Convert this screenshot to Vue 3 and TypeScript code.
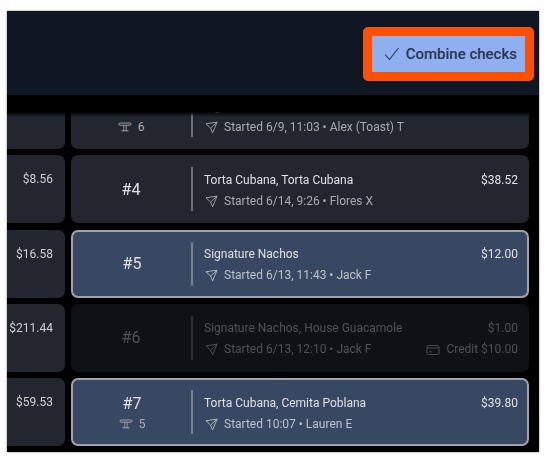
<script setup lang="ts">
interface Row {
  side: string
  num: string
  seats?: string
  title: string
  amount: string
  started: string
  state: 'normal' | 'selected' | 'dim'
  credit?: string
}
const rows: Row[] = [
  { side: '$24.10', num: '#3', seats: '6', title: 'Signature Nachos', amount: '$18.00', started: 'Started 6/9, 11:03 • Alex (Toast) T', state: 'normal' },
  { side: '$8.56', num: '#4', title: 'Torta Cubana, Torta Cubana', amount: '$38.52', started: 'Started 6/14, 9:26 • Flores X', state: 'normal' },
  { side: '$16.58', num: '#5', title: 'Signature Nachos', amount: '$12.00', started: 'Started 6/13, 11:43 • Jack F', state: 'selected' },
  { side: '$211.44', num: '#6', title: 'Signature Nachos, House Guacamole', amount: '$1.00', started: 'Started 6/13, 12:10 • Jack F', state: 'dim', credit: 'Credit $10.00' },
  { side: '$59.53', num: '#7', seats: '5', title: 'Torta Cubana, Cemita Poblana', amount: '$39.80', started: 'Started 10:07 • Lauren E', state: 'selected' },
]
</script>

<template>
  <div class="page">
    <div class="frame">
      <header class="header">
        <div class="highlight">
          <button class="combine" type="button">
            <svg class="check" viewBox="0 0 16 14" width="16" height="14" fill="none" stroke="currentColor" stroke-width="1.1">
              <path d="M1 7.5 L5.5 12.5 L14.5 1" />
            </svg>
            Combine checks
          </button>
        </div>
      </header>
      <div class="body">
        <div class="shade"></div>
        <div class="list">
          <div v-for="row in rows" :key="row.num" class="row">
            <div class="side">{{ row.side }}</div>
            <div class="card" :class="row.state">
              <div class="num">
                <div class="num-main">{{ row.num }}</div>
                <div v-if="row.seats" class="seats">
                  <svg viewBox="0 0 14 10" width="14" height="10" fill="none" stroke="currentColor">
                    <rect x="1" y="1" width="12" height="2.2" rx="1.1" stroke-width="0.9" />
                    <path d="M5.8 3.4 V8.4 M8.2 3.4 V8.4" stroke-width="0.8" />
                    <path d="M3.5 8.8 H10.5" stroke-width="1" />
                  </svg>
                  <span>{{ row.seats }}</span>
                </div>
              </div>
              <div class="divider"></div>
              <div class="info">
                <div class="line first">
                  <span class="title">{{ row.title }}</span>
                  <span>{{ row.amount }}</span>
                </div>
                <div class="line second">
                  <span class="started">
                    <svg viewBox="0 0 14 14" width="13" height="13" fill="none" stroke="currentColor" stroke-width="0.95" stroke-linejoin="round">
                      <path d="M1 3 L13 1.2 L8.2 12.8 L6 7.6 Z M6 7.6 L13 1.2" />
                    </svg>
                    {{ row.started }}
                  </span>
                  <span v-if="row.credit" class="credit">
                    <svg viewBox="0 0 14 12" width="14" height="12" fill="none" stroke="currentColor" stroke-width="0.9">
                      <rect x="1" y="1.5" width="12" height="9" rx="1.2" />
                      <path d="M1 4 H13 M3 7.8 H6" />
                    </svg>
                    {{ row.credit }}
                  </span>
                </div>
              </div>
            </div>
          </div>
        </div>
      </div>
    </div>
  </div>
</template>

<style>
html, body { margin: 0; background: #fff; }
</style>

<style scoped>
.page {
  width: 546px;
  height: 460px;
  padding: 11px 7px 8px;
  box-sizing: border-box;
  background: #fff;
  font-family: Roboto, "Liberation Sans", sans-serif;
  overflow: hidden;
}
.frame {
  width: 532px;
  height: 441px;
  display: flex;
  flex-direction: column;
  background: #000;
  box-shadow: 0 0 2px rgba(0, 0, 0, 0.5);
  overflow: hidden;
  filter: blur(0.3px);
}
.header {
  height: 84px;
  flex: none;
  background: #111722;
  display: flex;
  justify-content: flex-end;
  align-items: flex-start;
  padding: 16px 5px 0 0;
  box-sizing: border-box;
}
.highlight {
  border: 9px solid #ff5000;
  border-radius: 5px;
  display: flex;
}
.combine {
  width: 153px;
  height: 36px;
  border: 0;
  padding: 0 8px 0 0;
  background: #8fb0f0;
  color: #2a3350;
  font: 500 15px Roboto, "Liberation Sans", sans-serif;
  display: flex;
  align-items: center;
  justify-content: flex-end;
  gap: 6px;
  white-space: nowrap;
}
.check { flex: none; }
.body {
  flex: 1;
  position: relative;
  overflow: hidden;
}
.shade {
  position: absolute;
  inset: 0 0 auto 0;
  height: 22px;
  background: linear-gradient(#000 75%, rgba(0, 0, 0, 0));
  z-index: 1;
}
.list {
  display: flex;
  flex-direction: column;
  gap: 6.3px;
  margin-top: -14px;
}
.row {
  display: grid;
  grid-template-columns: 58px 458px;
  gap: 6px;
  height: 68px;
}
.side {
  background: #23262f;
  border-radius: 0 7px 7px 0;
  color: #cfd0d3;
  font-size: 12px;
  padding: 17px 12px 0 0;
  box-sizing: border-box;
  white-space: nowrap;
  display: flex;
  justify-content: flex-end;
  align-items: flex-start;
  line-height: 15px;
}
.card {
  display: flex;
  align-items: center;
  background: #23262f;
  border-radius: 7px;
  color: #dfe0e3;
  box-sizing: border-box;
  padding: 0 11px 0 0;
  font-size: 12px;
}
.card.selected {
  background: #384762;
  border: 2px solid #a0a4aa;
  padding-right: 9px;
}
.card.dim {
  background: #0e1216;
  color: #4e5257;
}
.num {
  width: 120px;
  flex: none;
  text-align: center;
  padding-top: 1px;
}
.selected .num { width: 118px; }
.num-main {
  font-size: 16px;
  line-height: 20px;
}
.seats {
  margin-top: 3px;
  display: flex;
  justify-content: center;
  align-items: center;
  gap: 6px;
  color: #a9abb0;
  font-size: 12px;
  line-height: 15px;
}
.divider {
  width: 2px;
  height: 44px;
  background: #6b6f78;
  flex: none;
}
.dim .divider { background: #2c2f33; }
.selected .divider { background: #78818f; }
.info {
  flex: 1;
  margin: 3px 0 0 11px;
  display: flex;
  flex-direction: column;
  gap: 6px;
}
.line {
  display: flex;
  justify-content: space-between;
  align-items: center;
  line-height: 15px;
  white-space: nowrap;
}
.second { color: #a9abb0; }
.selected .second { color: #bcc1ca; }
.dim .second { color: #4e5257; }
.started, .credit {
  display: flex;
  align-items: center;
  gap: 6px;
}
.started svg { margin-left: 1px; }
.credit { gap: 6px; }
</style>
